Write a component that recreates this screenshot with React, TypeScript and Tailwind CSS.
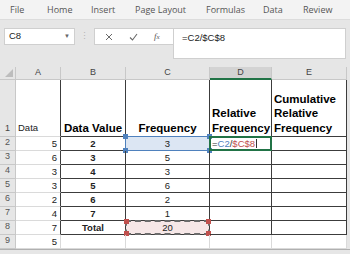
import React from 'react'

const menu = [
  { label: 'File', w: 'w-[37px]' },
  { label: 'Home', w: 'w-[44px]' },
  { label: 'Insert', w: 'w-[44px]' },
  { label: 'Page Layout', w: 'w-[71px]' },
  { label: 'Formulas', w: 'w-[57px]' },
  { label: 'Data', w: 'w-[40px]' },
  { label: 'Review', w: 'w-[40px]' },
]

const cols = ['A', 'B', 'C', 'D', 'E']

// row 2..9
const colA = ['5', '6', '3', '3', '2', '4', '7', '5']
const colB = ['2', '3', '4', '5', '6', '7', 'Total']
const colC = ['3', '5', '3', '6', '2', '1', '20']

const dark = 'border-[#3c3c3c]'

function Handles({ color }: { color: string }) {
  return (
    <>
      <span className={`absolute -left-[3px] -top-[3px] w-[5px] h-[5px] ${color}`} />
      <span className={`absolute -right-[3px] -top-[3px] w-[5px] h-[5px] ${color}`} />
      <span className={`absolute -left-[3px] -bottom-[3px] w-[5px] h-[5px] ${color}`} />
      <span className={`absolute -right-[3px] -bottom-[3px] w-[5px] h-[5px] ${color}`} />
    </>
  )
}

function DataCell({ row, col }: { row: number; col: number }) {
  // row: 2..9, col: 0..4 (A..E)
  const inTable = row <= 8 && col >= 1
  const rightDark = row <= 8
  const border = `border-r border-b ${rightDark ? 'border-r-[#3c3c3c]' : 'border-r-[#dadada]'} ${inTable ? 'border-b-[#3c3c3c]' : 'border-b-[#dadada]'}`
  let content: React.ReactNode = null
  let align = 'justify-center'
  let extra = ''
  let overlay: React.ReactNode = null

  if (col === 0) {
    content = colA[row - 2]
    align = 'justify-end pr-[3px]'
  } else if (col === 1 && row <= 8) {
    content = <span className="font-bold">{colB[row - 2]}</span>
  } else if (col === 2 && row <= 8) {
    content = colC[row - 2]
    if (row === 2) {
      extra = 'bg-[#dce6f3]'
      overlay = (
        <div className="absolute -left-px -top-px -right-px -bottom-px border border-[#4f81bd]">
          <Handles color="bg-[#4f81bd]" />
        </div>
      )
    }
    if (row === 8) {
      extra = 'bg-[#f6e7e7]'
      overlay = (
        <div className="absolute -left-px -top-px -right-px -bottom-px border-2 border-dashed border-[#6b6b6b]">
          <Handles color="bg-[#c0504d]" />
        </div>
      )
    }
  } else if (col === 3 && row === 2) {
    align = 'justify-start pl-[2px]'
    content = (
      <span className="flex items-center">
        <span className="text-[#333]">=</span>
        <span className="text-[#4f81bd]">C2</span>
        <span className="text-[#333]">/</span>
        <span className="text-[#c0504d]">$C$8</span>
        <span className="ml-px w-px h-[9px] bg-[#333]" />
      </span>
    )
    overlay = <div className="absolute -left-px -top-px -right-px -bottom-px border-2 border-[#217346]" />
  }

  return (
    <div className={`relative flex items-end pb-[1px] ${align} ${border} ${extra} text-[9.5px] leading-[11px] text-[#222]`}>
      {content}
      {overlay}
    </div>
  )
}

export default function App() {
  const rows = [2, 3, 4, 5, 6, 7, 8, 9]
  return (
    <div className="w-[350px] h-[254px] overflow-hidden bg-[#e6e6e6] flex flex-col font-['Liberation_Sans',Arial,sans-serif]">
      {/* menu bar */}
      <div className="h-[20px] bg-[#f3f3f3] border-b border-[#dcdcdc] flex items-center pl-[10px] text-[9px] text-[#555] font-['Open_Sans',sans-serif] shrink-0">
        {menu.map((m) => (
          <span key={m.label} className={`${m.w} shrink-0 whitespace-nowrap`}>{m.label}</span>
        ))}
      </div>

      {/* formula bar */}
      <div className="h-[47px] flex items-start pt-[8px] shrink-0">
        <div className="ml-[4px] w-[71px] h-[17px] bg-white border border-[#cfcfcf] flex items-center justify-between px-[4px] text-[9.5px] text-[#222]">
          <span>C8</span>
          <span className="text-[6px] text-[#666]">▼</span>
        </div>
        <div className="w-[19px] h-[17px] flex items-center justify-center text-[9px] text-[#b5b5b5]">⋮</div>
        <div className="w-[79px] h-[17px] bg-white border border-[#cfcfcf] border-r-0 flex items-center text-[#666]">
          <svg className="ml-[10px]" width="8" height="8" viewBox="0 0 8 8">
            <path d="M1 1L7 7M7 1L1 7" stroke="#6a6a6a" strokeWidth="1" />
          </svg>
          <svg className="ml-[16px]" width="9" height="8" viewBox="0 0 9 8">
            <path d="M1 4.5L3.5 7L8 1" stroke="#6a6a6a" strokeWidth="1.1" fill="none" />
          </svg>
          <span className="ml-[16px] text-[9px] italic font-['Liberation_Serif',serif] text-[#555]">
            f<span className="text-[7px]">x</span>
          </span>
        </div>
        <div className="w-[173px] h-[31px] bg-white border border-[#cfcfcf] pl-[8px] pt-[2px] text-[9.5px] text-[#222]">
          =C2/$C$8
        </div>
      </div>

      {/* grid */}
      <div className="grid grid-cols-[16px_45px_65px_84px_62px_75px] grid-rows-[13px_57px_repeat(8,14px)] bg-white w-[347px] shrink-0">
        {/* header row */}
        <div className="relative bg-[#e6e6e6] border-r border-b border-[#c8c8c8]">
          <svg className="absolute right-[2px] bottom-[2px]" width="8" height="8" viewBox="0 0 8 8">
            <path d="M8 0L8 8L0 8Z" fill="#bdbdbd" />
          </svg>
        </div>
        {cols.map((c) => (
          <div
            key={c}
            className={`flex items-center justify-center text-[9px] text-[#444] ${
              c === 'D'
                ? 'bg-[#d3d3d3] border-b-2 border-b-[#217346] border-r border-r-[#c8c8c8]'
                : 'bg-[#e6e6e6] border-r border-b border-[#c8c8c8]'
            }`}
          >
            {c}
          </div>
        ))}

        {/* row 1 */}
        <div className="bg-[#e6e6e6] border-r border-b border-[#c8c8c8] flex items-end justify-center pb-[1px] text-[9px] text-[#444]">1</div>
        <div className={`border-r border-b ${dark} border-b-[#dadada] flex items-end pl-[2px] pb-[1px] text-[9.5px] text-[#222]`}>Data</div>
        <div className={`border-r border-b ${dark} flex items-end justify-center pb-[1px] text-[11.5px] leading-[14px] font-bold text-black`}>Data Value</div>
        <div className={`border-r border-b ${dark} flex items-end justify-center pb-[1px] text-[11.5px] leading-[14px] font-bold text-black`}>Frequency</div>
        <div className={`border-r border-b ${dark} flex items-end pl-[2px] pb-[1px] text-[11.5px] leading-[14.5px] font-bold text-black`}>
          <span>Relative<br />Frequency</span>
        </div>
        <div className={`border-r border-b ${dark} flex items-end pl-[2px] pb-[1px] text-[11.5px] leading-[14.5px] font-bold text-black`}>
          <span>Cumulative<br />Relative<br />Frequency</span>
        </div>

        {rows.map((r) => (
          <React.Fragment key={r}>
            <div className="flex items-end justify-center pb-[1px] text-[9px] bg-[#e6e6e6] text-[#555] border-r border-b border-[#c8c8c8]">
              {r}
            </div>
            {cols.map((_, ci) => (
              <DataCell key={ci} row={r} col={ci} />
            ))}
          </React.Fragment>
        ))}
      </div>
      <div className="flex-1 border-t border-[#b0b0b0] bg-[#e6e6e6]" />
    </div>
  )
}
